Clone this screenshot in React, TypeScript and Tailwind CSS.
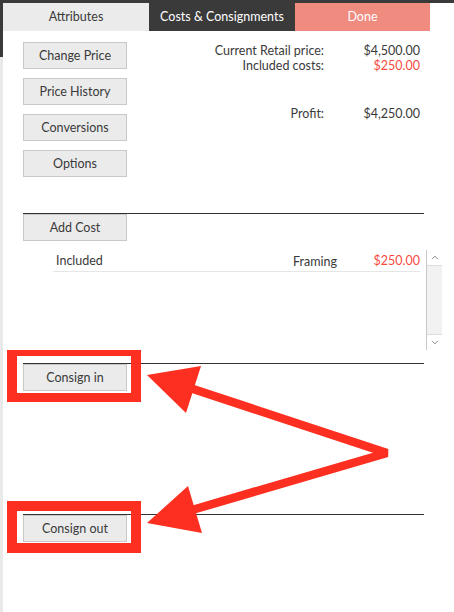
import React from 'react'

const btn =
  'w-[104px] h-[27px] flex items-center justify-center pt-[2px] bg-[#ebebeb] border border-[#c8c8c8] text-[12.5px] text-[#3a3a3a]'

function Chevron({ up }: { up?: boolean }) {
  return (
    <svg width="8" height="5" viewBox="0 0 8 5" fill="none">
      <path
        d={up ? 'M1 4.2 L4 1.2 L7 4.2' : 'M1 0.8 L4 3.8 L7 0.8'}
        stroke="#8a8a8a"
        strokeWidth="1"
      />
    </svg>
  )
}

export default function App() {
  return (
    <div className="relative w-[454px] h-[612px] overflow-hidden bg-white font-['Lato','Liberation_Sans',sans-serif] text-[#3a3a3a]">
      {/* Top edge */}
      <div className="h-[3px] bg-[#3a3a3a]" />

      <div className="flex">
        {/* Left edge strip */}
        <div className="w-[3px] flex flex-col">
          <div className="h-[54px] bg-[#3a3a3a]" />
          <div className="h-[555px] bg-[#e9e9e9]" />
        </div>

        <div className="flex-1 flex flex-col">
          {/* Tabs */}
          <div className="flex h-[28px] text-[12.5px]">
            <div className="w-[146px] flex items-center justify-center pt-[1px] bg-[#ebebeb] text-[#3a3a3a]">Attributes</div>
            <div className="w-[146px] flex items-center justify-center pt-[1px] bg-[#3a3a3a] text-white">Costs &amp; Consignments</div>
            <div className="w-[135px] flex items-center justify-center pt-[1px] bg-[#f08b80] text-white">Done</div>
          </div>

          <div className="pl-[20px] w-[421px]">
            {/* Price actions + summary */}
            <div className="flex pt-[11px] h-[182px]">
              <div className="flex flex-col gap-[9px]">
                <div className={btn}>Change Price</div>
                <div className={btn}>Price History</div>
                <div className={btn}>Conversions</div>
                <div className={btn}>Options</div>
              </div>
              <div className="flex-1 text-[12.5px] leading-[15px] pt-[1px]">
                <div className="grid grid-cols-[197px_96px]">
                  <span className="text-right">Current Retail price:</span>
                  <span className="text-right">$4,500.00</span>
                  <span className="text-right">Included costs:</span>
                  <span className="text-right text-[#f54b41]">$250.00</span>
                  <span className="text-right mt-[33px]">Profit:</span>
                  <span className="text-right mt-[33px]">$4,250.00</span>
                </div>
              </div>
            </div>

            {/* Costs */}
            <div className="border-t border-[#333]">
              <div className={btn}>Add Cost</div>
              <div className="flex ml-[30px] mt-[9px] h-[100px] w-[389px]">
                <div className="flex-1">
                  <div className="flex items-center h-[22px] pt-[1px] border-b border-[#e6e6e6] text-[12.5px]">
                    <span className="flex-1 pl-[3px]">Included</span>
                    <span className="w-[80px] pt-[2px]">Framing</span>
                    <span className="w-[47px] text-right text-[#f54b41]">$250.00</span>
                  </div>
                </div>
                <div className="ml-[6px] w-[16px] border-l border-[#c8c8c8] flex flex-col">
                  <div className="h-[16px] flex items-center justify-center border-b border-[#dcdcdc]">
                    <Chevron up />
                  </div>
                  <div className="flex-1 bg-[#f2f2f2]" />
                  <div className="h-[16px] flex items-center justify-center border-t border-[#dcdcdc]">
                    <Chevron />
                  </div>
                </div>
              </div>
            </div>

            {/* Consign in */}
            <div className="mt-[13px] border-t border-[#333] h-[151px]">
              <div className={btn}>Consign in</div>
            </div>

            {/* Consign out */}
            <div className="border-t border-[#333]">
              <div className={btn}>Consign out</div>
            </div>
          </div>
        </div>
      </div>

      {/* Annotation boxes */}
      <div className="absolute left-[7px] top-[350px] w-[134px] h-[52px] border-[10px] border-t-[6px] border-b-[9px] border-[#fd2f20]" />
      <div className="absolute left-[7px] top-[501px] w-[134px] h-[52px] border-[10px] border-[#fd2f20]" />

      {/* Annotation arrows */}
      <svg className="absolute inset-0 pointer-events-none" width="454" height="612" viewBox="0 0 454 612">
        <polyline
          points="190,388 387,453 192,510"
          fill="none"
          stroke="#fd2f20"
          strokeWidth="8.5"
          strokeLinejoin="bevel"
        />
        <polygon points="147,375 201,366 186,413" fill="#fd2f20" />
        <polygon points="147,523 188,486 202,533" fill="#fd2f20" />
      </svg>
    </div>
  )
}
